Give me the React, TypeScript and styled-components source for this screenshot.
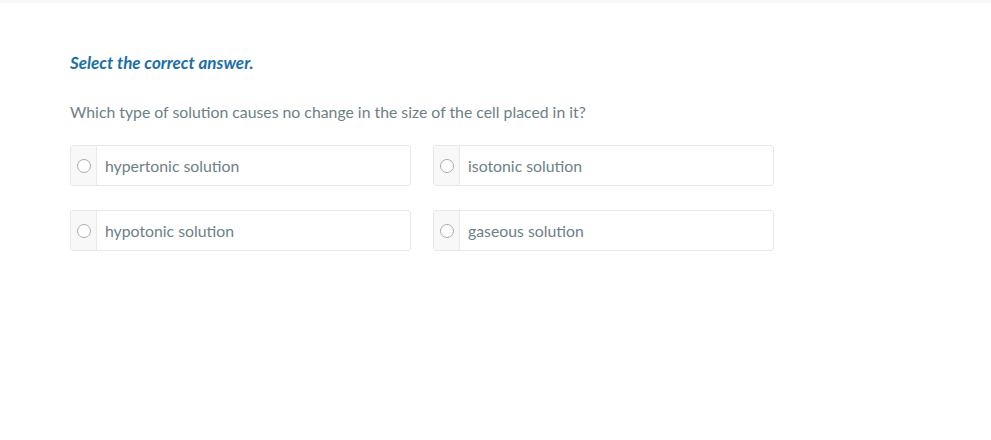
import styled, { createGlobalStyle } from "styled-components"

const GlobalStyle = createGlobalStyle`
	body {
		margin: 0;
		background: #ffffff;
		font-family: Lato, "Open Sans", sans-serif;
	}
`

const TopStrip = styled.div`
	height: 3px;
	background: #f7f9f9;
`

const Page = styled.main`
	padding: 49px 70px 0;
`

const Instruction = styled.h2`
	margin: 0;
	font-size: 17px;
	font-weight: 700;
	font-style: italic;
	line-height: 22px;
	color: #1b6fa8;
`

const Question = styled.p`
	margin: 27px 0 0;
	font-size: 15.8px;
	line-height: 22px;
	color: #6d7f87;
`

const Choices = styled.div`
	display: grid;
	grid-template-columns: 341px 341px;
	column-gap: 22px;
	row-gap: 24px;
	margin-top: 22px;
`

const Choice = styled.label`
	display: flex;
	height: 39px;
	border: 1px solid #e6e9ea;
	border-radius: 3px;
	overflow: hidden;
	cursor: pointer;
`

const RadioCell = styled.span`
	display: flex;
	align-items: center;
	justify-content: center;
	width: 25px;
	background: #f8f8f8;
	border-right: 1px solid #e8eaeb;
`

const RadioCircle = styled.span`
	width: 12px;
	height: 12px;
	border: 1px solid #a8adb0;
	border-radius: 50%;
	background: #ffffff;
`

const ChoiceText = styled.span`
	display: flex;
	align-items: center;
	padding-left: 8px;
	font-size: 15.8px;
	color: #6d7f87;
`

const options = [
	"hypertonic solution",
	"isotonic solution",
	"hypotonic solution",
	"gaseous solution",
]

function App() {
	return (
		<>
			<GlobalStyle />
			<TopStrip />
			<Page>
				<Instruction>Select the correct answer.</Instruction>
				<Question>
					Which type of solution causes no change in the size of the cell
					placed in it?
				</Question>
				<Choices>
					{options.map((option) => (
						<Choice key={option}>
							<RadioCell>
								<RadioCircle />
							</RadioCell>
							<ChoiceText>{option}</ChoiceText>
						</Choice>
					))}
				</Choices>
			</Page>
		</>
	)
}

export default App
